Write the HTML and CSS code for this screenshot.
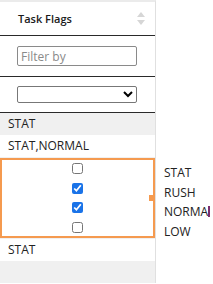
FILE: index.html
```html
<!DOCTYPE html>
<html lang="en">
<head>
    <meta charset="UTF-8">
    <meta name="viewport" content="width=device-width, initial-scale=1.0">
    <title>Task Flags</title>
    <link rel="stylesheet" href="styles.css">
</head>
<body>
    <div class="grid">
        <div class="column">
            <div class="header">
                <span class="title">Task Flags</span>
                <svg class="sort" width="8" height="13" viewBox="0 0 8 13">
                    <path d="M4 0 L8 5 L0 5 Z" fill="#d6d6d6"/>
                    <path d="M4 13 L8 8 L0 8 Z" fill="#d6d6d6"/>
                </svg>
            </div>
            <div class="filter-row">
                <input class="filter" type="text" placeholder="Filter by">
            </div>
            <div class="filter-row select-row">
                <select class="filter-select"><option></option></select>
            </div>
            <div class="row alt">STAT</div>
            <div class="row">STAT,NORMAL</div>
            <div class="row alt edit-slot"></div>
            <div class="row">STAT</div>
            <div class="row alt"></div>

            <div class="editor">
                <div class="checks">
                    <input type="checkbox">
                    <input type="checkbox" checked>
                    <input type="checkbox" checked>
                    <input type="checkbox">
                    <span class="handle"></span>
                </div>
                <div class="labels">
                    <span>STAT</span>
                    <span>RUSH</span>
                    <span>NORMA<b class="caret"></b></span>
                    <span>LOW</span>
                </div>
            </div>
        </div>
    </div>
</body>
</html>
```

FILE: styles.css
```css
body {
    margin: 0;
    font-family: "Open Sans", "Noto Sans", sans-serif;
    font-size: 12px;
    color: #222;
    background-color: white;
    width: 213px;
    height: 284px;
    overflow: hidden;
}
.grid {
    display: flex;
}
.column {
    position: relative;
    width: 155px;
    border-right: 1px solid #e0e0e0;
    border-top: 2px solid #ebebeb;
}
.header {
    height: 33px;
    display: flex;
    align-items: center;
    justify-content: space-between;
    padding: 0 10px 0 18px;
    border-bottom: 1px solid #2a2a2a;
}
.title {
    font-weight: 600;
    font-size: 11px;
    color: #1a1a1a;
}
.filter-row {
    height: 40px;
    display: flex;
    align-items: center;
    padding-left: 17px;
    border-bottom: 1px solid #2a2a2a;
}
.select-row {
    height: 35px;
}
.filter {
    box-sizing: border-box;
    width: 120px;
    height: 20px;
    padding: 0 3px;
    border: 1px solid #8a8a8a;
    border-radius: 2px;
    font-family: inherit;
    font-size: 12px;
}
.filter::placeholder {
    color: #8a8a8a;
}
.filter-select {
    box-sizing: border-box;
    width: 120px;
    height: 17px;
    border: 1px solid #777;
    border-radius: 2px;
    background: white;
    font-size: 11px;
}
.row {
    height: 22px;
    line-height: 22px;
    padding-left: 8px;
}
.alt {
    background-color: #f0f0f0;
}
.edit-slot {
    height: 82px;
}
.editor {
    position: absolute;
    top: 156px;
    left: 0;
    display: flex;
}
.checks {
    position: relative;
    box-sizing: border-box;
    width: 155px;
    height: 80px;
    border: 2px solid #f59a4f;
    background: white;
    display: flex;
    flex-direction: column;
    align-items: center;
    padding-top: 3px;
}
.checks input {
    width: 11px;
    height: 11px;
    margin: 0 0 8.6px 0;
    accent-color: #1a73e8;
}
.handle {
    position: absolute;
    right: -2px;
    top: 35px;
    width: 6px;
    height: 6px;
    background: #f59a4f;
}
.labels {
    display: flex;
    flex-direction: column;
    padding: 5px 0 0 9px;
    width: 48px;
    overflow: hidden;
    white-space: nowrap;
}
.labels span {
    height: 19.5px;
    line-height: 19.5px;
}
.caret {
    display: inline-block;
    width: 2px;
    height: 11px;
    vertical-align: -1px;
    background: #7b2d6e;
}
```
